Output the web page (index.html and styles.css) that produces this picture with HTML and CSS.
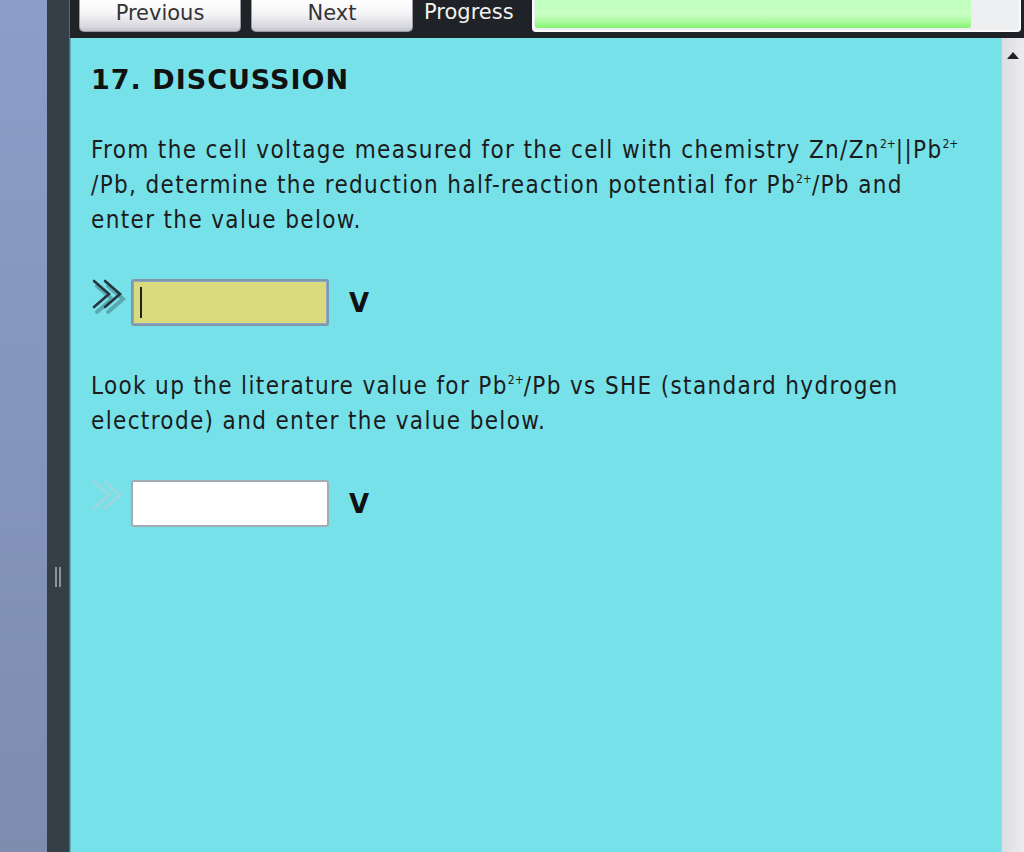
FILE: index.html
```html
<!DOCTYPE html>
<html lang="en">

<head>
    <meta charset="UTF-8">
    <title>17. Discussion</title>
    <link rel="stylesheet" href="styles.css">
</head>

<body>
    <div class="side"></div>
    <div class="splitter"><span class="grip"></span></div>

    <div class="main">
        <!-- top navigation -->
        <div class="topbar">
            <button class="nav-btn">Previous</button>
            <button class="nav-btn">Next</button>
            <span class="progress-label">Progress</span>
            <div class="progress">
                <div class="progress-fill" style="width: 90.3%"></div>
            </div>
        </div>

        <div class="body-row">
            <div class="content">
                <h2>17. DISCUSSION</h2>

                <p>From the cell voltage measured for the cell with chemistry Zn/Zn<sup>2+</sup>||Pb<sup>2+</sup><br>
                    /Pb, determine the reduction half-reaction potential for Pb<sup>2+</sup>/Pb and<br>
                    enter the value below.</p>

                <div class="answer-row">
                    <svg class="marker active" width="36" height="42" viewBox="0 0 36 42">
                        <g class="shadow" transform="translate(3 5)">
                            <polyline points="3,4 18,17 3,30" />
                            <polyline points="14,4 29,17 14,30" />
                        </g>
                        <g class="lines">
                            <polyline points="3,4 18,17 3,30" />
                            <polyline points="14,4 29,17 14,30" />
                        </g>
                    </svg>
                    <div class="answer focused"><span class="caret"></span></div>
                    <span class="unit">V</span>
                </div>

                <p>Look up the literature value for Pb<sup>2+</sup>/Pb vs SHE (standard hydrogen<br>
                    electrode) and enter the value below.</p>

                <div class="answer-row">
                    <svg class="marker" width="36" height="42" viewBox="0 0 36 42">
                        <g class="lines">
                            <polyline points="3,4 18,17 3,30" />
                            <polyline points="14,4 29,17 14,30" />
                        </g>
                    </svg>
                    <div class="answer"></div>
                    <span class="unit">V</span>
                </div>
            </div>

            <div class="scrollbar">
                <span class="arrow-up"></span>
            </div>
        </div>
    </div>
</body>

</html>
```

FILE: styles.css
```css
html, body {
    height: 100%;
}

body {
    margin: 0;
    display: flex;
    font-family: "DejaVu Sans", Verdana, sans-serif;
    overflow: hidden;
}

.side {
    width: 47px;
    background: linear-gradient(to bottom, #8c9dc8, #7d8db0);
}

.splitter {
    width: 23px;
    background-color: #353f48;
    border-right: 1px solid #5b6b73;
    display: flex;
    align-items: flex-start;
    justify-content: center;
    padding-top: 567px;
    box-sizing: border-box;
}

.grip {
    width: 6px;
    height: 20px;
    border-left: 2px solid #8b939a;
    border-right: 2px solid #8b939a;
    box-sizing: border-box;
}

.main {
    flex: 1;
    display: flex;
    flex-direction: column;
}

.topbar {
    height: 38px;
    box-sizing: border-box;
    background-color: #1f2327;
    display: flex;
    align-items: flex-start;
    padding: 0 3px 0 9px;
    gap: 10px;
}

.nav-btn {
    width: 162px;
    height: 32px;
    border: 1px solid #9a9ca4;
    border-top: none;
    border-radius: 0 0 5px 5px;
    background: linear-gradient(to bottom, #ffffff 0%, #f4f4f6 45%, #d8d8de 85%, #c2c2ca 100%);
    font-family: "DejaVu Sans", Verdana, sans-serif;
    font-size: 21px;
    color: #333;
    padding: 0 0 5px;
}

.progress-label {
    color: #f2f2f2;
    font-family: "DejaVu Sans", Verdana, sans-serif;
    font-size: 21px;
    line-height: 25px;
    margin: 0 8px 0 1px;
}

.progress {
    flex: 1;
    height: 32px;
    box-sizing: border-box;
    border: 2px solid #fafafa;
    border-top: none;
    border-radius: 0 0 4px 4px;
    background-color: #eeeff1;
    padding: 0 1px 2px;
}

.progress-fill {
    height: 100%;
    border-radius: 0 0 3px 3px;
    background: linear-gradient(to bottom, #bfffbf 0%, #c9ffc5 50%, #a8fb9a 80%, #82f26e 100%);
}

.body-row {
    flex: 1;
    display: flex;
}

.content {
    flex: 1;
    background-color: #77e1ea;
    border-left: 1px solid #5fb3ba;
    padding: 0 20px;
    color: #1b1b1b;
}

h2 {
    font-family: "DejaVu Sans", Verdana, sans-serif;
    font-size: 27px;
    font-weight: bold;
    letter-spacing: 1px;
    margin: 26px 0 38px;
    color: #111;
}

p {
    font-family: "DejaVu Sans Condensed", "DejaVu Sans", sans-serif;
    font-stretch: condensed;
    font-size: 24px;
    letter-spacing: 1.35px;
    line-height: 35px;
    margin: 0;
}

sup {
    font-size: 12px;
    letter-spacing: 0;
    line-height: 0;
    vertical-align: 10px;
}

.answer-row {
    display: flex;
    align-items: center;
    gap: 4px;
    margin: 41px 0 43px;
}

.marker {
    margin-top: -10px;
}

.marker polyline {
    fill: none;
    stroke-width: 2.6;
    stroke-linecap: round;
    stroke-linejoin: miter;
}

.marker .lines polyline {
    stroke: #9fd6dc;
}

.marker.active .lines polyline {
    stroke: #27343b;
}

.marker .shadow polyline {
    stroke: rgba(20, 40, 50, 0.3);
    stroke-width: 4;
}

.answer {
    width: 198px;
    height: 47px;
    box-sizing: border-box;
    border: 2px solid #a4acb2;
    border-radius: 3px;
    background-color: #fff;
    padding: 6px 7px;
}

.answer.focused {
    background-color: #d9da7c;
    border-color: #7f97a8;
    box-shadow: inset 0 0 0 1px #8aa7cf;
}

.caret {
    display: block;
    width: 2px;
    height: 31px;
    background-color: #222;
}

.unit {
    font-family: "DejaVu Sans", Verdana, sans-serif;
    font-weight: bold;
    font-size: 26px;
    margin-left: 16px;
    color: #111;
}

.scrollbar {
    width: 22px;
    background: linear-gradient(to right, #dcdde2, #ececef);
    border-left: 1px solid #c8cad0;
    display: flex;
    justify-content: center;
}

.arrow-up {
    width: 0;
    height: 0;
    margin-top: 14px;
    border-left: 6px solid transparent;
    border-right: 6px solid transparent;
    border-bottom: 7px solid #222;
}
```
